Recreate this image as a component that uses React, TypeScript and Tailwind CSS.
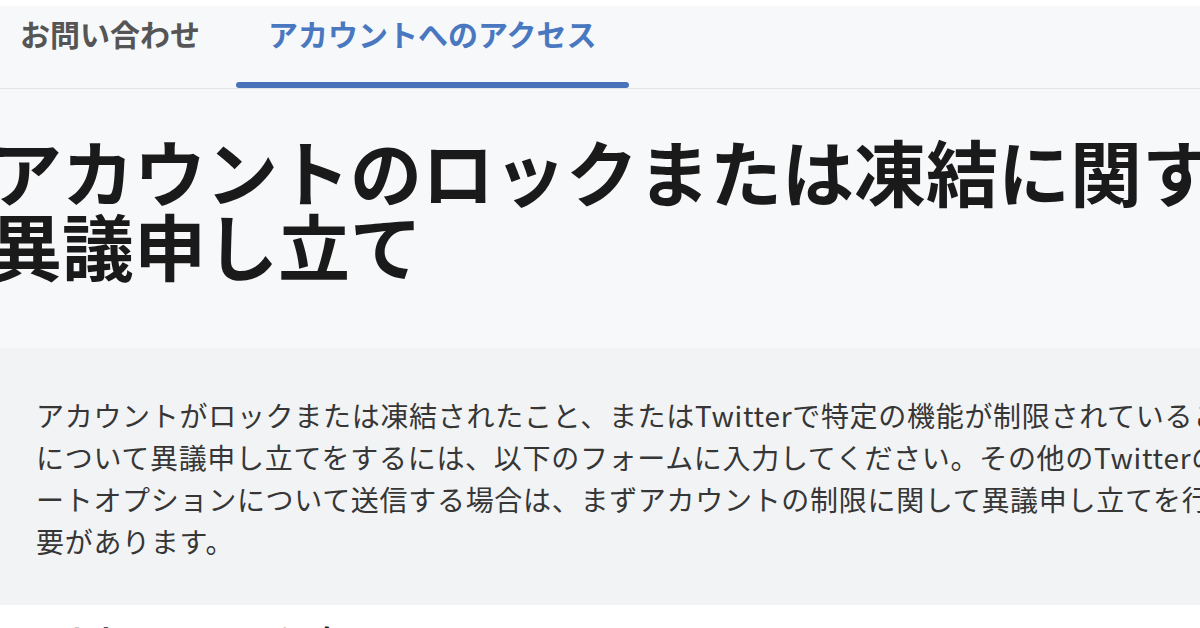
import React from 'react';

const jp = { fontFamily: '"Noto Sans CJK JP", "Noto Sans", sans-serif' };

const paragraphLines = [
  'アカウントがロックまたは凍結されたこと、またはTwitterで特定の機能が制限されていること',
  'について異議申し立てをするには、以下のフォームに入力してください。その他のTwitterのサポ',
  'ートオプションについて送信する場合は、まずアカウントの制限に関して異議申し立てを行う必',
  '要があります。',
];

export default function App() {
  return (
    <div className="w-[1200px] h-[628px] overflow-hidden bg-[#f7f8fa]" style={jp}>
      <div className="h-[6px] bg-white" />

      {/* Tabs */}
      <div className="flex h-[83px] border-b border-[#e2e4e8]">
        <div className="ml-[-12px] flex flex-col px-8">
          <span className="pt-[9px] text-[30px] leading-[36px] font-bold text-[#555555] whitespace-nowrap">
            お問い合わせ
          </span>
        </div>
        <div className="ml-[4px] flex flex-col px-8">
          <span className="pt-[9px] text-[30px] leading-[36px] font-semibold text-[#4a78c0] whitespace-nowrap">
            アカウントへのアクセス
          </span>
          <div className="mt-auto mx-[-32px] h-[6px] rounded-full bg-[#4872b9]" />
        </div>
      </div>

      {/* Title */}
      <div className="pt-[44px] pb-[67px]">
        <h1 className="ml-[-10px] text-[72px] leading-[74px] font-bold text-[#1a1a1a]">
          <div className="whitespace-nowrap">アカウントのロックまたは凍結に関する</div>
          <div className="whitespace-nowrap">異議申し立て</div>
        </h1>
      </div>

      {/* Description */}
      <div className="bg-[#f1f3f5] pt-[46px] pb-[43px] pl-[36px]">
        {paragraphLines.map((line) => (
          <p key={line} className="whitespace-nowrap text-[28px] leading-[42px] tracking-[0.7px] text-[#363636]">
            {line}
          </p>
        ))}
      </div>

      {/* Next section */}
      <div className="bg-white h-[200px] pt-[13px] pl-[36px]">
        <p className="whitespace-nowrap text-[28px] leading-[42px] font-bold text-[#1a1a1a]">
          アカウントのユーザー名
        </p>
      </div>
    </div>
  );
}
